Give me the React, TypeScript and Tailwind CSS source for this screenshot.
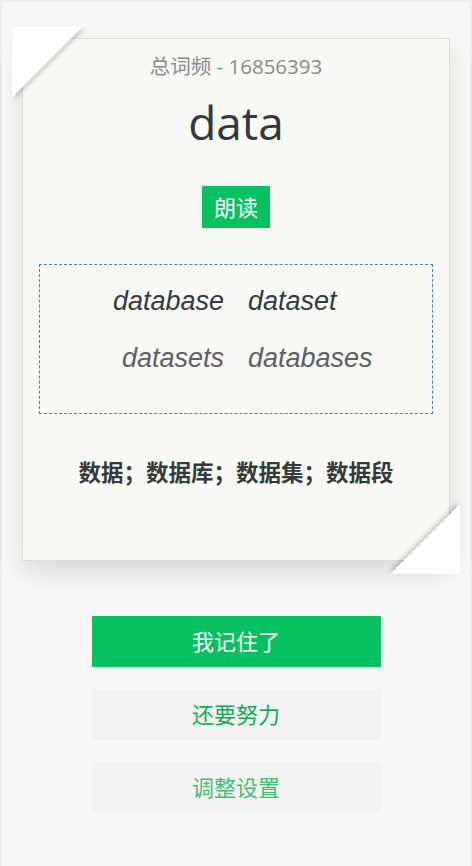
import React from 'react';

const words = [
  ['database', 'dataset'],
  ['datasets', 'databases'],
];

const sans = "font-['Open_Sans','Noto_Sans_CJK_SC',sans-serif]";

export default function App() {
  return (
    <div
      className={`${sans} relative min-h-[866px] border-x-2 border-t-2 border-[#eeeeec] bg-[#f9f8f6] pt-[36px]`}
    >
      {/* word card */}
      <div className="relative mx-[20px] h-[523px] border border-[#dcdcdc] bg-[#f8f8f4] shadow-[0_12px_24px_rgba(0,0,0,0.12)]">
        <div className="flex flex-col items-center pt-[14px]">
          <div className="text-[20.5px] leading-[26px] text-[#8a8a8a]">总词频 - 16856393</div>
          <div className="mt-[15px] text-[46px] leading-[56px] text-[#33383d]">data</div>
          <button className="mt-[36px] h-[42px] bg-[#07c160] px-[12px] text-[22px] leading-[42px] text-white">
            朗读
          </button>
        </div>

        <div className="mx-[16px] mt-[36px] h-[150px] border border-dashed border-[#4a7db3] pt-[8px]">
          {words.map((row, i) => (
            <div
              key={i}
              className={`grid h-[57px] grid-cols-2 items-center gap-x-[24px] font-['Liberation_Sans',sans-serif] text-[27px] italic ${
                i === 0 ? 'text-[#363a3e]' : 'text-[#5d6164]'
              }`}
            >
              <span className="text-right">{row[0]}</span>
              <span className="text-left">{row[1]}</span>
            </div>
          ))}
        </div>

        <div className="mt-[44px] text-center text-[22.5px] font-bold leading-[30px] text-[#36393c]">
          数据；数据库；数据集；数据段
        </div>

        {/* folded corners */}
        <div className="absolute left-[-11px] top-[-12px] h-[70px] w-[70px] bg-[linear-gradient(135deg,#ffffff_50%,transparent_50%)] drop-shadow-[2px_2px_2px_rgba(0,0,0,0.18)]" />
        <div className="absolute bottom-[-14px] right-[-11px] h-[70px] w-[70px] bg-[linear-gradient(315deg,#ffffff_50%,transparent_50%)] drop-shadow-[-2px_-2px_2px_rgba(0,0,0,0.18)]" />
      </div>

      {/* actions */}
      <div className="mx-auto mt-[55px] flex w-[289px] flex-col gap-[22px]">
        <button className="h-[51px] bg-[#07c160] text-[22px] text-white">我记住了</button>
        <button className="h-[51px] bg-[#f2f2f2] text-[22px] text-[#16ab5c]">还要努力</button>
        <button className="h-[51px] bg-[#f3f3f2] text-[22px] text-[#3dbf76]">调整设置</button>
      </div>
    </div>
  );
}
